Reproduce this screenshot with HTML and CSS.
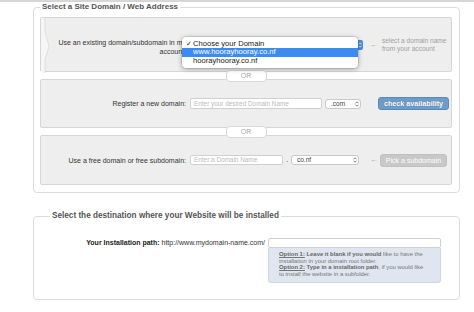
FILE: index.html
```html
<!DOCTYPE html>
<html>
<head>
<meta charset="utf-8">
<link rel="stylesheet" href="styles.css">
</head>
<body>
<div class="topbar"></div>
<div class="wrap">
  <fieldset class="section first">
    <legend>Select a Site Domain / Web Address</legend>
    <div class="box box1">
      <svg class="notch" width="9" height="55" viewBox="0 0 9 55"><polygon points="0,0 4,0 4,14 8,28 4,42 4,55 0,55" fill="#f6f6f6"/><polyline points="4,0 4,14 8,28 4,42 4,55" fill="none" stroke="#d9d9d9" stroke-width="0.8"/></svg>
      <div class="row">
        <div class="label">Use an existing domain/subdomain in my<br>account:</div>
        <div class="selwrap">
          <div class="select sel1"><span class="stepper blue"><svg width="4" height="6" viewBox="0 0 4 6"><path d="M0.5 2.3 L2 0.8 L3.5 2.3 M0.5 3.7 L2 5.2 L3.5 3.7" fill="none" stroke="#fff" stroke-width="0.8"/></svg></span></div>
          <div class="popup">
            <div class="item"><span class="tick">✓</span>Choose your Domain</div>
            <div class="item hl">www.hoorayhooray.co.nf</div>
            <div class="item">hoorayhooray.co.nf</div>
          </div>
        </div>
        <span class="arrow a1">←</span>
        <div class="hint">select a domain name<br>from your account</div>
      </div>
    </div>
    <div class="sep"><span class="or">OR</span></div>
    <div class="box box2">
      <div class="row">
        <div class="label">Register a new domain:</div>
        <div class="input in2">Enter your desired Domain Name</div>
        <div class="select sel2">.com<span class="stepper"><svg width="4" height="6" viewBox="0 0 4 6"><path d="M0.5 2.3 L2 0.8 L3.5 2.3 M0.5 3.7 L2 5.2 L3.5 3.7" fill="none" stroke="#666" stroke-width="0.8"/></svg></span></div>
        <button class="btn avail">check availability</button>
      </div>
    </div>
    <div class="sep"><span class="or">OR</span></div>
    <div class="box box3">
      <div class="row">
        <div class="label">Use a free domain or free subdomain:</div>
        <div class="input in3">Enter a Domain Name</div>
        <span class="dot">.</span>
        <div class="select sel3">co.nf<span class="stepper"><svg width="4" height="6" viewBox="0 0 4 6"><path d="M0.5 2.3 L2 0.8 L3.5 2.3 M0.5 3.7 L2 5.2 L3.5 3.7" fill="none" stroke="#666" stroke-width="0.8"/></svg></span></div>
        <span class="arrow a3">←</span>
        <button class="btn pick">Pick a subdomain</button>
      </div>
    </div>
  </fieldset>
  <fieldset class="section second">
    <legend>Select the destination where your Website will be installed</legend>
    <div class="pathrow">
      <div class="plabel"><b>Your Installation path:</b> http://www.mydomain-name.com/</div>
      <div class="pctrl">
        <div class="pinput"></div>
        <div class="info">
          <u><b>Option 1:</b></u> <b>Leave it blank if you would</b> like to have the<br>
          installation in your domain root folder.<br>
          <u><b>Option 2:</b></u> <b>Type in a installation path</b>, if you would like<br>
          to install the website in a subfolder.
        </div>
      </div>
    </div>
  </fieldset>
</div>
</body>
</html>
```
FILE: styles.css
```css
* { box-sizing: border-box; }
html, body { margin: 0; padding: 0; background: #fff; }
body {
  width: 474px;
  height: 312px;
  overflow: hidden;
  font-family: "Liberation Sans", Arial, sans-serif;
  color: #333;
}
.topbar { height: 2px; background: #d6d6d6; }
.wrap { padding: 0 14px 0 33px; }

.section {
  border: 1px solid #dcdcdc;
  border-radius: 4px;
  margin: 0;
  min-width: 0;
}
.section legend {
  font-size: 8px;
  line-height: 10px;
  font-weight: bold;
  color: #555;
  padding: 0 2px;
}
.first {
  margin-top: 0;
  padding: 5px 7px 7px 6px;
}
.second {
  margin-top: 18px;
  padding: 17px 18px 16px 0;
}
.second legend { margin-left: 16px; font-size: 8.2px; }

.box {
  position: relative;
  background: #eeeeee;
  border: 1px solid #d6d6d6;
  border-radius: 2px;
  display: flex;
  align-items: center;
}
.box1 { height: 55px; }
.box2 { height: 49px; }
.box3 { height: 50px; }
.notch { position: absolute; left: 0; top: 0; }

.sep {
  height: 7px;
  display: flex;
  align-items: center;
  justify-content: center;
}
.or {
  position: relative;
  z-index: 1;
  width: 41px;
  height: 12px;
  background: #fff;
  border: 1px solid #d8d8d8;
  border-radius: 4px;
  font-size: 7px;
  line-height: 10px;
  color: #aaa;
  text-align: center;
}

.row {
  display: flex;
  align-items: center;
  width: 100%;
}
.label {
  width: 145px;
  margin-right: 4px;
  text-align: right;
  font-size: 7px;
  line-height: 9px;
  color: #333;
  flex: none;
}
.box1 .label { margin-top: 4px; }

.selwrap { position: relative; flex: none; }
.select {
  position: relative;
  height: 10px;
  background: #fff;
  border: 1px solid #c9c9c9;
  border-radius: 3px;
  font-size: 6.5px;
  line-height: 8px;
  color: #444;
  padding-left: 5px;
  flex: none;
}
.sel1 { width: 173px; }
.sel2 { width: 36px; margin-left: 3px; }
.sel3 { width: 68px; }
.stepper {
  position: absolute;
  right: 1px;
  top: 0;
  width: 5px;
  height: 8px;
  display: flex;
  align-items: center;
  justify-content: center;
  border-radius: 2px;
}
.stepper.blue { background: #4a8fe0; right: -1px; top: -1px; height: 10px; width: 6px; }

.popup {
  position: absolute;
  left: -8px;
  top: -3px;
  width: 176px;
  padding: 3px 0;
  background: #fff;
  border-radius: 4px;
  box-shadow: 0 1px 5px rgba(0,0,0,0.35), 0 0 0 0.5px rgba(0,0,0,0.15);
  z-index: 2;
}
.item {
  position: relative;
  height: 8.5px;
  font-size: 7.6px;
  line-height: 8.5px;
  color: #222;
  padding-left: 11px;
}
.item.hl { background: #3a8cf0; color: #fff; }
.tick { position: absolute; left: 4px; top: 0; font-size: 7px; }

.arrow {
  font-size: 8px;
  line-height: 8px;
  color: #86b386;
  flex: none;
}
.a1 { margin-left: 7px; }
.hint {
  margin-left: 4px;
  font-size: 6.6px;
  line-height: 7.5px;
  color: #a0a0a0;
}

.input {
  height: 11px;
  background: #fff;
  border: 1px solid #d0d0d0;
  border-radius: 2px;
  font-size: 6.4px;
  line-height: 9px;
  color: #bbb;
  padding-left: 3px;
  flex: none;
  white-space: nowrap;
  overflow: hidden;
}
.in2 { width: 132px; }
.in3 { width: 93px; height: 10px; line-height: 8px; }
.dot { width: 8px; text-align: center; font-size: 8px; line-height: 8px; color: #444; }
.a3 { margin-left: 11px; }

.btn {
  font-family: "Liberation Sans", Arial, sans-serif;
  height: 13px;
  padding: 0;
  border-radius: 3px;
  font-size: 7px;
  color: #fff;
  flex: none;
  white-space: nowrap;
}
.avail {
  width: 71px;
  margin-left: 17px;
  background: #6d9cc8;
  border: 1px solid #5b89b5;
  font-weight: bold;
  font-size: 7.2px;
  text-shadow: 0 0 1px rgba(0,0,0,0.3);
}
.pick {
  width: 67px;
  margin-left: 2px;
  background: #c8c8c8;
  border: 1px solid #c0c0c0;
}

.pathrow {
  display: flex;
  align-items: flex-start;
}
.plabel {
  flex: 1;
  text-align: right;
  font-size: 7px;
  line-height: 10px;
  color: #333;
  padding-right: 3px;
}
.plabel b { color: #222; }
.pctrl { width: 173px; flex: none; }
.pinput {
  height: 10px;
  background: #fff;
  border: 1px solid #d0d0d0;
  border-radius: 2px;
}
.info {
  height: 35px;
  background: #dfe6ef;
  border: 1px solid #d0d8e3;
  border-top: none;
  border-radius: 0 0 3px 3px;
  padding: 3px 0 0 10px;
  font-size: 5.9px;
  line-height: 6.6px;
  color: #777;
  white-space: nowrap;
}
.info b { color: #666; }
```
